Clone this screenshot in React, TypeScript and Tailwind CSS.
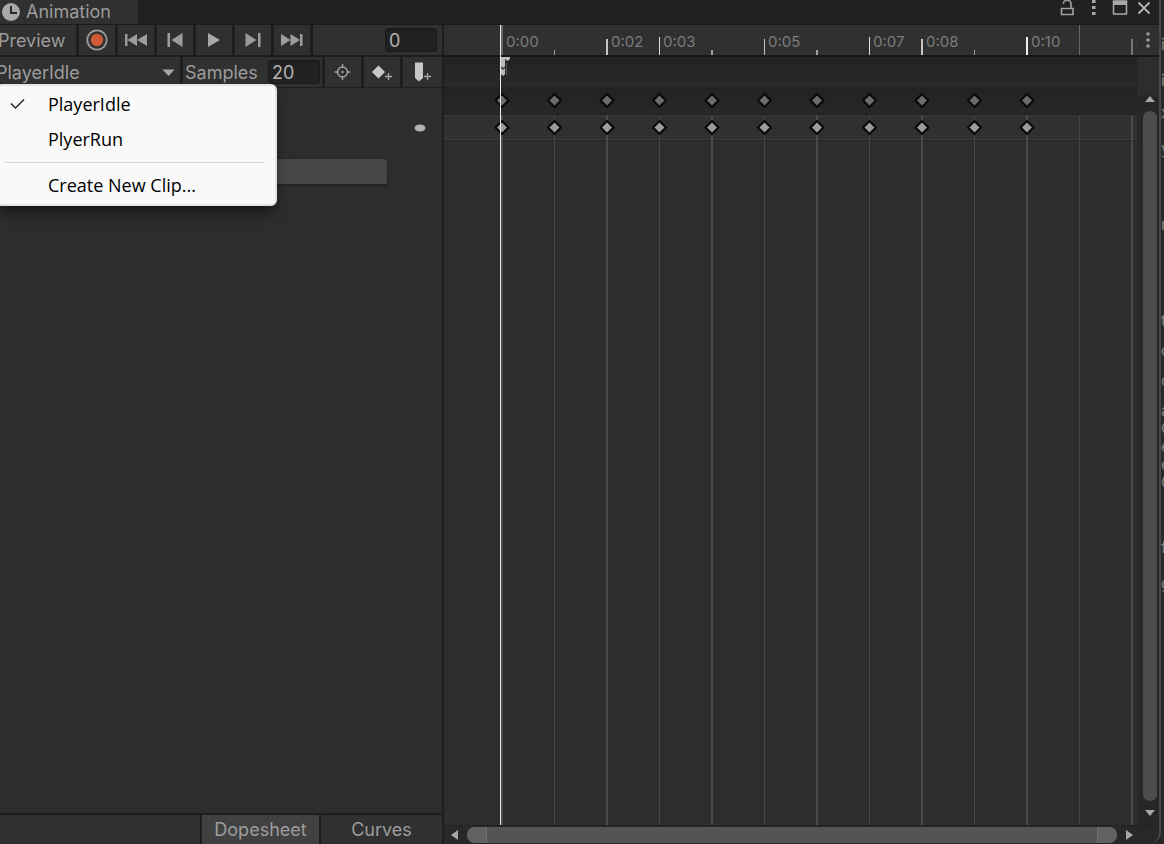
import type { ReactNode } from "react";

type Tick = "short" | "mid" | "tall" | "last" | "full" | "dim";

const FRAMES: { x: number; tick: Tick; wide?: boolean; label?: string }[] = [
  { x: 57, tick: "full", wide: true, label: "0:00" },
  { x: 110, tick: "short" },
  { x: 162, tick: "mid", wide: true, label: "0:02" },
  { x: 215, tick: "tall", label: "0:03" },
  { x: 267, tick: "short", wide: true },
  { x: 320, tick: "mid", label: "0:05" },
  { x: 372, tick: "short", wide: true },
  { x: 425, tick: "tall", label: "0:07" },
  { x: 477, tick: "mid", wide: true, label: "0:08" },
  { x: 530, tick: "short" },
  { x: 582, tick: "last", wide: true, label: "0:10" },
  { x: 635, tick: "full" },
  { x: 687, tick: "dim", wide: true, label: "0:12" },
];
const KEYS = FRAMES.slice(0, 11);

const TICK_STYLE: Record<Tick, string> = {
  short: "h-[5px] bg-[#a0a0a0]",
  mid: "h-4 bg-[#c4c4c4]",
  tall: "h-[18px] bg-[#e0e0e0]",
  last: "h-[18px] bg-[#eeeeee]",
  full: "h-[30px] bg-[#666666]",
  dim: "h-4 bg-[#777777]",
};

// letters of the neighbouring panel peeking out behind the window edge
const BEHIND = [
  { text: "i", gap: "h-[52px]" },
  { text: "i", gap: "h-9" },
  { text: "x", gap: "h-8" },
  { text: "y", gap: "h-9" },
  { text: "n", gap: "h-[76px]" },
  { text: "t", gap: "h-24" },
  { text: "o", gap: "h-[30px]" },
  { text: "o", gap: "h-[30px]" },
  { text: "a", gap: "h-[30px]" },
  { text: "C", gap: "h-[18px]" },
  { text: "e", gap: "h-[18px]" },
  { text: "e", gap: "h-[18px]" },
  { text: "C", gap: "h-[18px]" },
  { text: "f", gap: "h-[65px]" },
  { text: "g", gap: "h-9" },
];

export default function App() {
  return (
    <div className="flex h-screen overflow-hidden bg-[#242424] font-['Inter',sans-serif] text-lg text-[#9c9c9c] select-none">
      <div className="flex min-w-0 flex-1 flex-col overflow-hidden rounded-br-xl border-r-2 border-[#484848] bg-[#2d2d2d]">
        <TitleBar />
        <div className="flex min-h-0 flex-1">
          <SidePanel />
          <Timeline />
        </div>
      </div>
      <aside aria-hidden className="w-[3px] shrink-0 overflow-hidden bg-[#2a2a2a]">
        {BEHIND.map((b, i) => (
          <div key={i} className={`flex items-end text-base leading-4 text-[#848484] ${b.gap}`}>
            {b.text}
          </div>
        ))}
      </aside>
    </div>
  );
}

function TitleBar() {
  return (
    <header className="flex h-[25px] shrink-0 justify-between border-b border-[#1a1a1a] bg-[#212121]">
      <div className="flex w-[138px] items-center gap-[6px] bg-[#303030] pl-0.5">
        <svg width="18" height="18" viewBox="0 0 18 18">
          <circle cx="9" cy="9" r="9" fill="#a8a8a8" />
          <path d="M9 3v7h6" fill="none" stroke="#2a2a2a" strokeWidth="2" />
        </svg>
        <h1>Animation</h1>
      </div>
      <div className="flex h-4 items-center gap-2 pr-1.5">
        <button aria-label="Lock">
          <svg width="18" height="16" viewBox="0 0 18 16" fill="none" stroke="#a0a0a0" strokeWidth="1.6">
            <path d="M2.500 8.500h11.500V14.500h-11.500zM4.500 4V3.500a3.500 3 0 0 1 7.500 0v5" />
          </svg>
        </button>
        <button aria-label="Menu">
          <svg width="18" height="16" viewBox="0 0 18 16" fill="#a8a8a8">
            <path d="M7 0h3.500v3H7zM7 6h3.500v3H7zM7 12h3.500v3H7z" />
          </svg>
        </button>
        <button aria-label="Maximize">
          <svg width="18" height="16" viewBox="0 0 18 16">
            <path d="M2.500 1h13v13h-13z" fill="none" stroke="#a8a8a8" strokeWidth="1.500" />
            <path d="M2.500 1h13v4h-13z" fill="#a8a8a8" />
          </svg>
        </button>
        <button aria-label="Close" className="-ml-0.5">
          <svg width="18" height="16" viewBox="0 0 18 16" stroke="#b0b0b0" strokeWidth="2">
            <path d="M3.500 2.500l11 11M14.500 2.500l-11 11" />
          </svg>
        </button>
      </div>
    </header>
  );
}

function Cell({ label, children }: { label: string; children: ReactNode }) {
  return (
    <button aria-label={label} className="flex w-9 shrink-0 items-center justify-center bg-[#303030]">
      {children}
    </button>
  );
}

function SidePanel() {
  return (
    <section className="flex w-[444px] shrink-0 flex-col border-r-2 border-[#1e1e1e]">
      <div className="flex h-8 shrink-0 gap-[3px] border-b-2 border-[#1c1c1c] bg-[#1e1e1e]">
        <button className="flex w-[76px] shrink-0 items-center bg-[#303030] pt-0.5">
          <span className="-ml-0.5">Preview</span>
        </button>
        <Cell label="Record">
          <svg width="22" height="22" viewBox="0 0 22 22">
            <circle cx="11" cy="11" r="9.700" fill="none" stroke="#9c9c9c" strokeWidth="1.800" />
            <circle cx="11" cy="11" r="6.200" fill="#cf5a33" />
          </svg>
        </Cell>
        <Cell label="First frame">
          <svg width="22" height="14" viewBox="0 0 22 14" fill="#9c9c9c">
            <path d="M0 1h2.500v12H0zM12 1v12L2.500 7zM22 1v12L12 7z" />
          </svg>
        </Cell>
        <Cell label="Previous key">
          <svg width="16" height="16" viewBox="0 0 16 16" fill="#9c9c9c">
            <path d="M0.500 1H3v14H0.500zM15.500 1v14l-11-7z" />
          </svg>
        </Cell>
        <Cell label="Play">
          <svg width="14" height="16" viewBox="0 0 14 16" fill="#a8a8a8">
            <path d="M1 1v14l12-7z" />
          </svg>
        </Cell>
        <Cell label="Next key">
          <svg width="16" height="16" viewBox="0 0 16 16" fill="#9c9c9c">
            <path d="M0.500 1v14l11-7zM13 1h2.500v14H13z" />
          </svg>
        </Cell>
        <Cell label="Last frame">
          <svg width="22" height="14" viewBox="0 0 22 14" fill="#9c9c9c">
            <path d="M0 1v12l9.500-6zM9.500 1v12l9.500-6zM19 1h2.500v12H19z" />
          </svg>
        </Cell>
        <div className="flex flex-1 items-center justify-end bg-[#303030] pr-[5px]">
          <input
            aria-label="Current frame"
            defaultValue="0"
            className="h-6 w-[52px] rounded border border-t-2 border-[#1a1a1a] bg-[#212121] px-[3px] text-[#b4b4b4] outline-none"
          />
        </div>
      </div>

      <div className="flex h-[31px] shrink-0 gap-[3px] border-b border-[#1e1e1e] bg-[#1e1e1e]">
        <div className="relative flex w-[180px] shrink-0 bg-[#303030]">
          <button aria-haspopup="menu" aria-expanded="true" className="flex flex-1 items-center justify-between pt-0.5 pr-[5px]">
            <span className="-ml-1">PlayerIdle</span>
            <svg width="13" height="8" viewBox="0 0 13 8" fill="#a8a8a8">
              <path d="M0.500 0.500h12L6.500 7z" />
            </svg>
          </button>
          <ClipMenu />
        </div>
        <div className="flex w-[139px] shrink-0 items-center justify-between bg-[#303030] pr-0.5 pl-0.5">
          <label htmlFor="samples" className="pt-0.5">
            Samples
          </label>
          <input
            id="samples"
            defaultValue="20"
            className="h-6 w-[52px] rounded border border-t-2 border-[#1a1a1a] bg-[#212121] px-[3px] text-[#b4b4b4] outline-none"
          />
        </div>
        <Cell label="Filter by selection">
          <svg width="18" height="18" viewBox="0 0 18 18" fill="none" stroke="#a0a0a0" strokeWidth="1.400">
            <circle cx="8.500" cy="9" r="5" />
            <path d="M8.500 1v4M8.500 13v4M0.500 9h4M12.500 9h4" />
            <circle cx="8.500" cy="9" r="1.200" fill="#a0a0a0" stroke="none" />
          </svg>
        </Cell>
        <Cell label="Add keyframe">
          <svg width="22" height="18" viewBox="0 0 22 18">
            <path d="M7.500 2.500L14 9l-6.500 6.500L1 9z" fill="#c8c8c8" />
            <path d="M14 13.500h7M17.500 10v7" stroke="#a8a8a8" strokeWidth="1.300" />
          </svg>
        </Cell>
        <button aria-label="Add event" className="flex flex-1 items-center justify-center bg-[#303030]">
          <svg width="18" height="20" viewBox="0 0 18 20">
            <path d="M1 0.500h8V16l-4 3.500L1 16z" fill="#c8c8c8" />
            <path d="M10 14.500h7M13.500 11v7" stroke="#a8a8a8" strokeWidth="1.300" />
          </svg>
        </button>
      </div>

      <div className="flex flex-1 flex-col pt-9">
        <button aria-label="Property options" className="mr-4 self-end">
          <svg width="12" height="8" viewBox="0 0 12 8">
            <ellipse cx="6" cy="4" rx="5.500" ry="3.500" fill="#b4b4b4" />
          </svg>
        </button>
        <button
          aria-label="Add Property"
          className="mt-[26px] ml-[54px] h-7 w-[334px] rounded border border-b-2 border-[#242424] bg-[#464646]"
        />
      </div>

      <div className="flex h-[31px] shrink-0 gap-0.5 border-t-2 border-[#1e1e1e] bg-[#1e1e1e]">
        <div className="w-[200px] bg-[#303030]" />
        <button className="w-[117px] bg-[#414141]">Dopesheet</button>
        <button className="flex-1 bg-[#303030]">Curves</button>
      </div>
    </section>
  );
}

function ClipMenu() {
  const item = "flex h-[35px] w-full items-center pl-12 text-left";
  return (
    <div
      role="menu"
      className="absolute top-[27px] -left-1 z-10 w-[281px] rounded-md border-2 border-[#e4e4e4] bg-[#f9f9f9] pb-0.5 pl-0.5 font-['Open_Sans',sans-serif] text-lg text-black shadow-lg shadow-black/40"
    >
      <button role="menuitem" className={`${item} relative`}>
        <svg className="absolute left-2.5" width="16" height="12" viewBox="0 0 16 12" fill="none" stroke="#222" strokeWidth="1.400">
          <path d="M1 5.500l4.500 4.500L14 1.500" />
        </svg>
        PlayerIdle
      </button>
      <button role="menuitem" className={item}>
        PlyerRun
      </button>
      <hr className="mt-1.5 mr-[11px] mb-1 ml-[5px] border-[#d6d6d6]" />
      <button role="menuitem" className={item}>
        Create New Clip...
      </button>
    </div>
  );
}

function KeyRow({ fill }: { fill: string }) {
  return (
    <>
      {KEYS.map((k) => (
        <svg
          key={k.x}
          className="absolute inset-y-0 my-auto -translate-x-1/2"
          style={{ left: k.x + 1 }}
          width="18"
          height="17"
          viewBox={k.wide ? "0 0 18 17" : "0.5 0 18 17"}
        >
          <path d="M9 2l6.500 6.500L9 15 2.500 8.500z" fill={fill} stroke="#0a0a0a" strokeWidth="2.200" strokeLinejoin="round" />
        </svg>
      ))}
    </>
  );
}

function Timeline() {
  return (
    <section className="flex min-w-0 flex-1 flex-col">
      <div className="flex min-h-0 flex-1">
        <div className="relative flex min-w-0 flex-1 flex-col">
          <div className="relative h-8 shrink-0 overflow-hidden border-b-2 border-[#161616] bg-[#303030]">
            {FRAMES.map((f) => (
              <div key={f.x} className="absolute inset-y-0 flex items-end" style={{ left: f.x }}>
                <i className={`${f.wide ? "w-0.5" : "w-px"} ${TICK_STYLE[f.tick]}`} />
                {f.label && <span className="mb-[3px] ml-[3px] text-[15px] leading-5 text-[#7c7c7c]">{f.label}</span>}
              </div>
            ))}
          </div>
          <div className="h-[30px] shrink-0 bg-linear-to-b from-[#232323] to-[#292929]" />
          <div className="relative z-10 h-7 shrink-0 border-b border-[#1e1e1e] bg-linear-to-b from-[#222222] to-[#282828]">
            <KeyRow fill="#6c6c6c" />
          </div>
          <div className="h-[25px] shrink-0 border-y border-[#3c3c3c] bg-[#303030]" />
          <div className="flex-1 border-t-2 border-[#292929]" />
          <div className="absolute inset-x-0 top-[90px] bottom-0 overflow-hidden">
            {FRAMES.map((f) => (
              <i
                key={f.x}
                className={`absolute inset-y-0 ${f.wide ? "w-0.5 bg-[#4a4a4a]" : "w-px bg-[#464646]"}`}
                style={{ left: f.x }}
              />
            ))}
            <div className="relative h-[25px]">
              <KeyRow fill="#9c9c9c" />
            </div>
          </div>
          <svg className="absolute top-8 left-14" width="12" height="20" viewBox="0 0 12 20">
            <path d="M0 0h5v17l-2 2-2-2z" fill="#bcbcbc" />
            <path d="M5 0h5v2L7.500 4 5 2z" fill="#bcbcbc" />
            <path d="M1 10l2 2 2-2" fill="none" stroke="#333" strokeWidth="1.500" />
            <path d="M6.500 6v12" stroke="#555" />
          </svg>
          <i className="absolute inset-y-0 left-14 z-20 w-px bg-[#e8e8e8]" />
        </div>

        <div className="flex w-[22px] shrink-0 flex-col bg-[#272727]">
          <button aria-label="Timeline options" className="flex h-[30px] shrink-0 items-center justify-center bg-[#303030]">
            <svg width="4" height="16" viewBox="0 0 4 16" fill="#9c9c9c">
              <circle cx="2" cy="2" r="1.800" />
              <circle cx="2" cy="8" r="1.800" />
              <circle cx="2" cy="14" r="1.800" />
            </svg>
          </button>
          <div className="h-10 shrink-0 border-t-2 border-[#161616] bg-[#2d2d2d]" />
          <div className="flex flex-1 flex-col items-center gap-2 pb-2 pl-1">
            <svg width="12" height="8" viewBox="0 0 12 8" fill="#a8a8a8">
              <path d="M6 1l5 6H1z" />
            </svg>
            <div className="w-[14px] flex-1 rounded-full bg-[#4c4c4c]" />
            <svg width="12" height="8" viewBox="0 0 12 8" fill="#a8a8a8">
              <path d="M1 1h10L6 7z" />
            </svg>
          </div>
        </div>
      </div>

      <div className="flex h-[19px] shrink-0 items-center gap-[9px] border-t border-[#222222] bg-[#282828] pr-[26px] pl-[7px]">
        <svg width="7" height="10" viewBox="0 0 7 10" fill="#a8a8a8">
          <path d="M7 0v10L0 5z" />
        </svg>
        <div className="flex h-4 flex-1 justify-between overflow-hidden rounded-full bg-[#545454]">
          <i className="w-5 border-r border-[#707070] bg-[#626262]" />
          <i className="w-5 border-l border-[#707070] bg-[#626262]" />
        </div>
        <svg width="7" height="10" viewBox="0 0 7 10" fill="#a8a8a8">
          <path d="M0 0v10l7-5z" />
        </svg>
      </div>
    </section>
  );
}
